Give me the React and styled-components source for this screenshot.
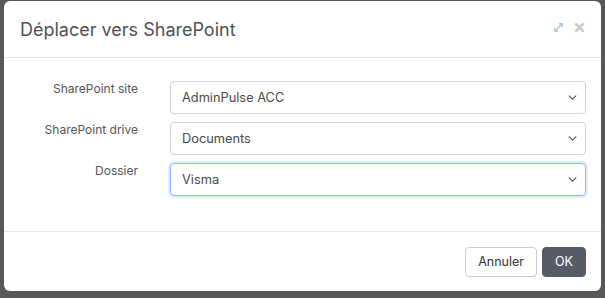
import React from "react";
import styled, { createGlobalStyle } from "styled-components";

const GlobalStyle = createGlobalStyle`
  html, body {
    margin: 0;
    padding: 0;
    background: #585858;
    font-family: Inter, "Noto Sans", sans-serif;
  }
`;

//backdrop behind the modal
const Backdrop = styled.div`
  width: 605px;
  height: 298px;
  background: #585858;
  display: flex;
  padding: 1px 4px 0 4px;
  box-sizing: border-box;
  overflow: hidden;
`;

const Modal = styled.div`
  width: 597px;
  height: 290px;
  background: #fff;
  border-radius: 6px;
  display: flex;
  flex-direction: column;
`;

const Header = styled.div`
  height: 56px;
  flex-shrink: 0;
  display: flex;
  align-items: center;
  justify-content: space-between;
  padding: 0 16px 0 16px;
  border-bottom: 1px solid #e5e5e5;
`;

const Title = styled.h4`
  margin: 0;
  font-size: 18px;
  font-weight: 400;
  color: #505057;
`;

const Tools = styled.div`
  display: flex;
  align-items: center;
  gap: 10px;
  margin-top: -4px;
`;

const Body = styled.div`
  flex: 1;
  display: flex;
  flex-direction: column;
  gap: 8px;
  padding: 23px 15px 0 16px;
`;

const Row = styled.div`
  display: grid;
  grid-template-columns: 150px 1fr;
  align-items: start;
`;

const Label = styled.label`
  font-size: 12px;
  color: #555;
  text-align: right;
  padding: 0 32px 0 0;
  line-height: 16px;
`;

const SelectBox = styled.div`
  height: 33px;
  box-sizing: border-box;
  border: 1px solid ${(p) => (p.focus ? "#86b7fe" : "#ced4da")};
  border-radius: 4px;
  box-shadow: ${(p) => (p.focus ? "0 0 0 2px rgba(13,110,253,0.12)" : "none")};
  display: flex;
  align-items: center;
  justify-content: space-between;
  padding: 0 8px 0 11px;
  font-size: 12.8px;
  color: #4a4a4a;
`;

const Footer = styled.div`
  height: 60px;
  box-sizing: border-box;
  flex-shrink: 0;
  border-top: 1px solid #e5e5e5;
  display: flex;
  align-items: center;
  justify-content: flex-end;
  gap: 5px;
  padding: 0 15px 0 0;
`;

const Button = styled.button`
  height: 30px;
  padding: 0 12px;
  font-family: inherit;
  font-size: 12.5px;
  border-radius: 4px;
  border: 1px solid ${(p) => (p.primary ? "#565b67" : "#ccc")};
  background: ${(p) => (p.primary ? "#565b67" : "#fff")};
  color: ${(p) => (p.primary ? "#fff" : "#333")};
`;

function Chevron() {
  return (
    <svg width="9" height="9" viewBox="0 0 16 16">
      <path d="M2 5l6 6 6-6" fill="none" stroke="#555" strokeWidth="2" strokeLinecap="round" strokeLinejoin="round" />
    </svg>
  );
}

function Field({ label, value, focus }) {
  return (
    <Row>
      <Label>{label}</Label>
      <SelectBox focus={focus}>
        <span>{value}</span>
        <Chevron />
      </SelectBox>
    </Row>
  );
}

export default function App() {
  return (
    <>
      <GlobalStyle />
      <Backdrop>
        <Modal>
          <Header>
            <Title>Déplacer vers SharePoint</Title>
            <Tools>
              <svg width="11" height="11" viewBox="0 0 12 12">
                <path d="M2 10L10 2M6.5 2H10V5.5M2 6.5V10H5.5" fill="none" stroke="#a4cdd8" strokeWidth="1.6" />
              </svg>
              <svg width="11" height="11" viewBox="0 0 12 12">
                <path d="M1.5 1.5L10.5 10.5M10.5 1.5L1.5 10.5" stroke="#c8c8c8" strokeWidth="2.6" />
              </svg>
            </Tools>
          </Header>
          <Body>
            <Field label="SharePoint site" value="AdminPulse ACC" />
            <Field label="SharePoint drive" value="Documents" />
            <Field label="Dossier" value="Visma" focus />
          </Body>
          <Footer>
            <Button>Annuler</Button>
            <Button primary>OK</Button>
          </Footer>
        </Modal>
      </Backdrop>
    </>
  );
}
